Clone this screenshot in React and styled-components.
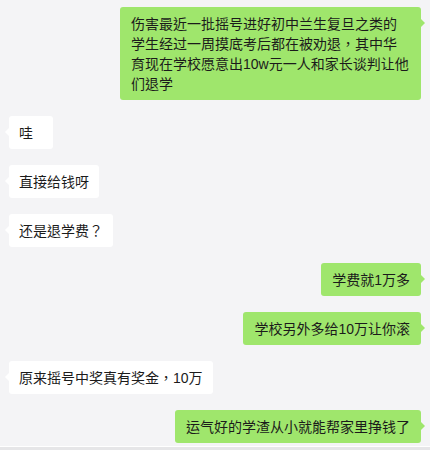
import React from "react";
import styled, { createGlobalStyle, css } from "styled-components";

const GlobalStyle = createGlobalStyle`
  html, body {
    margin: 0;
    padding: 0;
    background: #f4f4f6;
  }
  body {
    font-family: "Liberation Sans", "Noto Sans CJK TC", "Noto Sans CJK SC", sans-serif;
  }
`;

const Page = styled.div`
  width: 430px;
  height: 450px;
  box-sizing: border-box;
  background: #f4f4f6;
  display: flex;
  flex-direction: column;
  overflow: hidden;
`;

const Thread = styled.div`
  display: flex;
  flex-direction: column;
  gap: 16px;
  padding: 7px 9px 0;
`;

const Row = styled.div`
  display: flex;
  justify-content: ${(p) => (p.$mine ? "flex-end" : "flex-start")};
`;

const Bubble = styled.div`
  position: relative;
  box-sizing: border-box;
  max-width: 301px;
  min-width: 44px;
  padding: 6.5px ${(p) => (p.$mine ? "11px" : "10px")};
  border-radius: 3px;
  font-size: 14px;
  line-height: 20px;
  color: #1b1b1b;
  background: ${(p) => (p.$mine ? "#9fe66c" : "#ffffff")};
  word-break: break-all;

  &::before {
    content: "";
    position: absolute;
    top: 11px;
    width: 0;
    height: 0;
    border: 5px solid transparent;
    ${(p) =>
      p.$mine
        ? css`
            right: -9px;
            border-left-color: #9fe66c;
          `
        : css`
            left: -9px;
            border-right-color: #ffffff;
          `}
  }
`;

const Footer = styled.div`
  margin-top: auto;
  height: 3px;
  border-top: 1px solid #ffffff;
  background: #e6e6e8;
`;

const messages = [
  {
    mine: true,
    text: "伤害最近一批摇号进好初中兰生复旦之类的学生经过一周摸底考后都在被劝退，其中华育现在学校愿意出10w元一人和家长谈判让他们退学",
  },
  { mine: false, text: "哇" },
  { mine: false, text: "直接给钱呀" },
  { mine: false, text: "还是退学费？" },
  { mine: true, text: "学费就1万多" },
  { mine: true, text: "学校另外多给10万让你滚" },
  { mine: false, text: "原来摇号中奖真有奖金，10万" },
  { mine: true, text: "运气好的学渣从小就能帮家里挣钱了" },
];

export default function App() {
  return (
    <>
      <GlobalStyle />
      <Page>
        <Thread>
          {messages.map((m, i) => (
            <Row key={i} $mine={m.mine}>
              <Bubble $mine={m.mine}>{m.text}</Bubble>
            </Row>
          ))}
        </Thread>
        <Footer />
      </Page>
    </>
  );
}
